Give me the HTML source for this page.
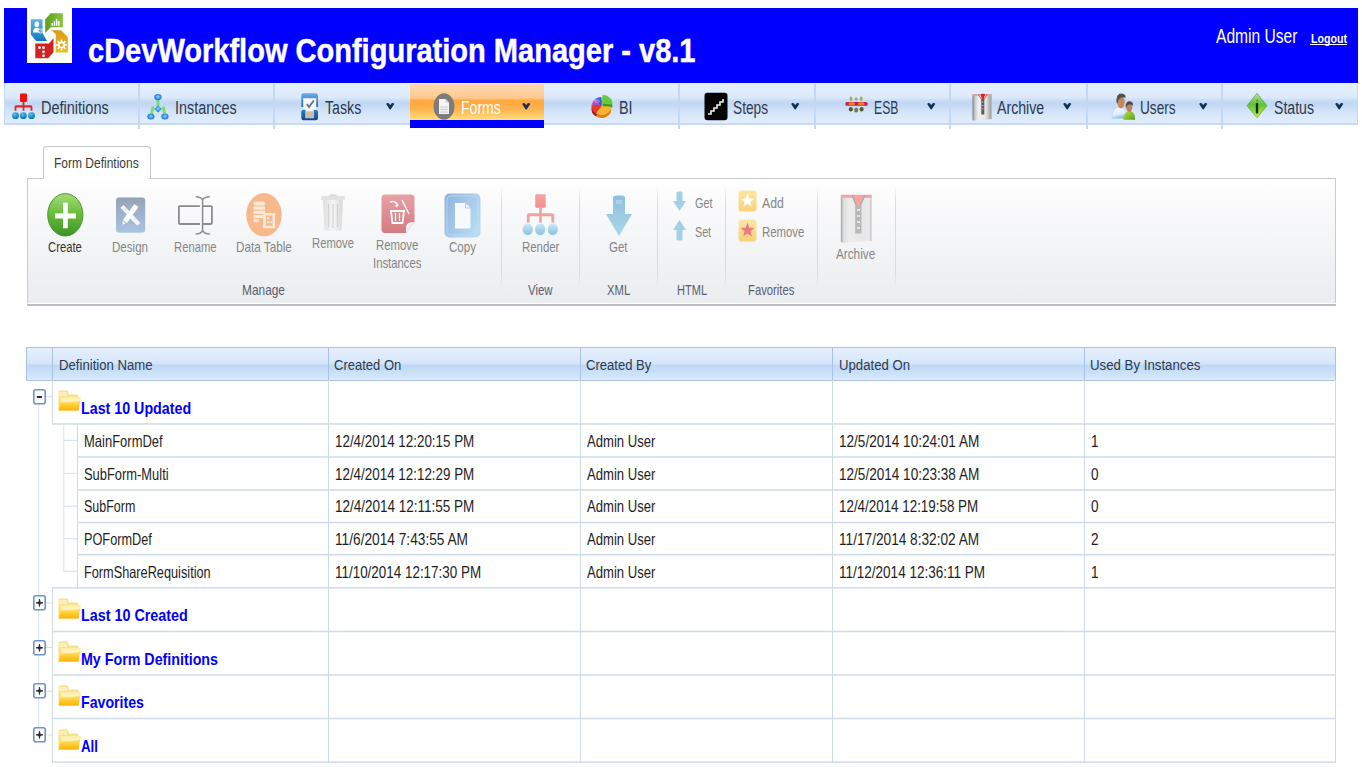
<!DOCTYPE html>
<html><head><meta charset="utf-8"><style>
html,body{margin:0;padding:0;background:#fff;}
body{width:1362px;height:767px;overflow:hidden;position:relative;font-family:"Liberation Sans",sans-serif;}
.t{position:absolute;white-space:nowrap;transform-origin:0 0;}
svg{overflow:visible}
</style></head><body>
<div style="position:absolute;left:4px;top:8px;width:1354px;height:75px;background:#0000fe"></div>
<svg style="position:absolute;left:27px;top:8px" width="45" height="55" viewBox="0 0 45 55">
<rect width="45" height="55" fill="#fff"/>
<defs>
<linearGradient id="lgB" x1="0" y1="0" x2="0" y2="1"><stop offset="0" stop-color="#5cb6e8"/><stop offset="1" stop-color="#1479c0"/></linearGradient>
<linearGradient id="lgG" x1="0" y1="0" x2="1" y2="0"><stop offset="0" stop-color="#5d9e22"/><stop offset="1" stop-color="#8cc43a"/></linearGradient>
<linearGradient id="lgO" x1="0" y1="0" x2="0" y2="1"><stop offset="0" stop-color="#d89a22"/><stop offset="1" stop-color="#f2bb10"/></linearGradient>
</defs>
<polygon points="3.8,11.2 15.5,11.2 15.5,25 20,32.9 9.1,32.9 3.8,26.5" fill="url(#lgB)"/>
<polygon points="18.2,25 18.2,11.3 23.8,5.3 35.9,5.3 35.9,19.3 23.8,19.3" fill="url(#lgG)"/>
<polygon points="24.2,22.3 34,22.3 40.8,29.1 40.8,44.6 28.7,44.6 28.7,26.1" fill="url(#lgO)"/>
<polygon points="8.3,35.5 22,35.5 26.5,30.2 26.5,44.2 21.2,50.3 8.3,50.3" fill="#d02222"/>
<ellipse cx="9.8" cy="16.3" rx="2.3" ry="2.9" fill="#fff"/><path d="M6 24.5 Q6 20 9.8 19.8 Q13.5 20 13.5 24.5 Z" fill="#fff"/><circle cx="13.3" cy="23" r="2.1" fill="#3d9ad8" stroke="#e8f4fb" stroke-width="0.9"/><path d="M12.2 24 L14.4 22" stroke="#e8f4fb" stroke-width="0.7"/>
<rect x="24.5" y="15" width="1.5" height="2.8" fill="#fff"/><rect x="26.7" y="13.2" width="1.5" height="4.6" fill="#fff"/><rect x="28.9" y="10.8" width="1.5" height="7" fill="#fff"/><rect x="31.1" y="13" width="1.5" height="4.8" fill="#fff"/>
<circle cx="34.5" cy="37" r="3.6" fill="#fff"/><path d="M34.5 31.5 V42.5 M29 37 H40 M30.6 33.1 L38.4 40.9 M38.4 33.1 L30.6 40.9" stroke="#fff" stroke-width="1.6"/><circle cx="34.5" cy="37" r="1.8" fill="#e9a81a"/>
<circle cx="12.5" cy="39.7" r="1.4" fill="#fff"/><circle cx="16.5" cy="39.7" r="1.4" fill="#fff"/><circle cx="16.5" cy="43.8" r="1.4" fill="#fff"/><circle cx="16.5" cy="47.8" r="1.4" fill="#fff"/>
</svg>
<div class="t" style="left:88.00px;top:33.41px;font-size:34px;line-height:34px;color:#fff;font-weight:bold;transform:scaleX(0.8537);-webkit-text-stroke:0.5px #fff;">cDevWorkflow Configuration Manager - v8.1</div>
<div class="t" style="left:1215.50px;top:26.07px;font-size:20px;line-height:20px;color:#fff;transform:scaleX(0.7799);">Admin User</div>
<div class="t" style="left:1310.60px;top:31.59px;font-size:13px;line-height:13px;color:#fff;font-weight:bold;transform:scaleX(0.8159);">Logout</div>
<div style="position:absolute;left:1310px;top:44px;width:37px;height:1px;background:#fff"></div>
<div style="position:absolute;left:4px;top:83px;width:1354px;height:40px;border-bottom:2px solid #c6daf2;background:linear-gradient(#e5f1fd 0px,#dce9fb 14.5px,#c6daf4 18px,#c3d8f3 21px,#d4e4f9 29px,#e2eefc 40px)"></div>
<div style="position:absolute;left:4px;top:83px;width:1px;height:42px;background:#c6daf2"></div>
<div style="position:absolute;left:138px;top:84px;width:1.5px;height:45px;background:#c3d8f2"></div>
<div style="position:absolute;left:273px;top:84px;width:1.5px;height:45px;background:#c3d8f2"></div>
<div style="position:absolute;left:678px;top:84px;width:1.5px;height:45px;background:#c3d8f2"></div>
<div style="position:absolute;left:814px;top:84px;width:1.5px;height:45px;background:#c3d8f2"></div>
<div style="position:absolute;left:949px;top:84px;width:1.5px;height:45px;background:#c3d8f2"></div>
<div style="position:absolute;left:1086px;top:84px;width:1.5px;height:45px;background:#c3d8f2"></div>
<div style="position:absolute;left:1221px;top:84px;width:1.5px;height:45px;background:#c3d8f2"></div>
<div style="position:absolute;left:1357px;top:83px;width:1px;height:42px;background:#c6daf2"></div>
<div style="position:absolute;left:410px;top:84px;width:134px;height:36px;background:linear-gradient(#fed8b0 0px,#fdca90 14px,#ffa83e 16.5px,#ffb24e 25px,#fde07c 36px)"></div>
<div style="position:absolute;left:410px;top:120px;width:134px;height:8px;background:#0000fe"></div>
<div class="t" style="left:41.00px;top:98.76px;font-size:18px;line-height:18px;color:#2e3a4e;transform:scaleX(0.8060);">Definitions</div>
<div class="t" style="left:175.30px;top:98.76px;font-size:18px;line-height:18px;color:#2e3a4e;transform:scaleX(0.8000);">Instances</div>
<div class="t" style="left:325.40px;top:98.76px;font-size:18px;line-height:18px;color:#2e3a4e;transform:scaleX(0.7870);">Tasks</div>
<div class="t" style="left:460.50px;top:98.56px;font-size:18px;line-height:18px;color:#fff;transform:scaleX(0.7824);">Forms</div>
<div class="t" style="left:619.00px;top:98.76px;font-size:18px;line-height:18px;color:#2e3a4e;transform:scaleX(0.8000);">BI</div>
<div class="t" style="left:733.00px;top:98.76px;font-size:18px;line-height:18px;color:#2e3a4e;transform:scaleX(0.7609);">Steps</div>
<div class="t" style="left:873.90px;top:98.76px;font-size:18px;line-height:18px;color:#2e3a4e;transform:scaleX(0.6778);">ESB</div>
<div class="t" style="left:997.00px;top:98.76px;font-size:18px;line-height:18px;color:#2e3a4e;transform:scaleX(0.7867);">Archive</div>
<div class="t" style="left:1140.00px;top:98.76px;font-size:18px;line-height:18px;color:#2e3a4e;transform:scaleX(0.7574);">Users</div>
<div class="t" style="left:1273.60px;top:98.76px;font-size:18px;line-height:18px;color:#2e3a4e;transform:scaleX(0.7824);">Status</div>
<svg style="position:absolute;left:385.5px;top:102.8px" width="9" height="7" viewBox="0 0 9 7"><path d="M0.3 1.3 Q0.3 0 1.6 0 Q2.8 0 3.6 1.2 L4.2 2.2 L4.8 1.2 Q5.6 0 6.8 0 Q8.1 0 8.1 1.3 L4.6 6.6 L3.8 6.6 Z" fill="#12305a"/></svg>
<svg style="position:absolute;left:521.6px;top:102.8px" width="9" height="7" viewBox="0 0 9 7"><path d="M0.3 1.3 Q0.3 0 1.6 0 Q2.8 0 3.6 1.2 L4.2 2.2 L4.8 1.2 Q5.6 0 6.8 0 Q8.1 0 8.1 1.3 L4.6 6.6 L3.8 6.6 Z" fill="#12305a"/></svg>
<svg style="position:absolute;left:791px;top:102.8px" width="9" height="7" viewBox="0 0 9 7"><path d="M0.3 1.3 Q0.3 0 1.6 0 Q2.8 0 3.6 1.2 L4.2 2.2 L4.8 1.2 Q5.6 0 6.8 0 Q8.1 0 8.1 1.3 L4.6 6.6 L3.8 6.6 Z" fill="#12305a"/></svg>
<svg style="position:absolute;left:926.7px;top:102.8px" width="9" height="7" viewBox="0 0 9 7"><path d="M0.3 1.3 Q0.3 0 1.6 0 Q2.8 0 3.6 1.2 L4.2 2.2 L4.8 1.2 Q5.6 0 6.8 0 Q8.1 0 8.1 1.3 L4.6 6.6 L3.8 6.6 Z" fill="#12305a"/></svg>
<svg style="position:absolute;left:1063px;top:102.8px" width="9" height="7" viewBox="0 0 9 7"><path d="M0.3 1.3 Q0.3 0 1.6 0 Q2.8 0 3.6 1.2 L4.2 2.2 L4.8 1.2 Q5.6 0 6.8 0 Q8.1 0 8.1 1.3 L4.6 6.6 L3.8 6.6 Z" fill="#12305a"/></svg>
<svg style="position:absolute;left:1198.6px;top:102.8px" width="9" height="7" viewBox="0 0 9 7"><path d="M0.3 1.3 Q0.3 0 1.6 0 Q2.8 0 3.6 1.2 L4.2 2.2 L4.8 1.2 Q5.6 0 6.8 0 Q8.1 0 8.1 1.3 L4.6 6.6 L3.8 6.6 Z" fill="#12305a"/></svg>
<svg style="position:absolute;left:1334.7px;top:102.8px" width="9" height="7" viewBox="0 0 9 7"><path d="M0.3 1.3 Q0.3 0 1.6 0 Q2.8 0 3.6 1.2 L4.2 2.2 L4.8 1.2 Q5.6 0 6.8 0 Q8.1 0 8.1 1.3 L4.6 6.6 L3.8 6.6 Z" fill="#12305a"/></svg>
<svg style="position:absolute;left:12px;top:93px" width="24" height="27" viewBox="0 0 24 27">
<defs><radialGradient id="rgb1" cx="0.4" cy="0.3" r="0.7"><stop offset="0" stop-color="#5cc0f0"/><stop offset="1" stop-color="#0a6fb0"/></radialGradient></defs>
<rect x="8" y="0.6" width="7" height="8.5" rx="1" fill="#f01010"/>
<path d="M10.6 9 h1.8 v3.3 h6.5 q1.5 0 1.5 1.5 v4 h-1.8 v-3.2 h-6.2 v3.2 h-1.8 v-3.2 h-6.2 v3.2 h-1.8 v-4 q0-1.5 1.5-1.5 h6.5 z" fill="#e02424"/>
<circle cx="3.5" cy="22.7" r="3.4" fill="url(#rgb1)"/><circle cx="11.3" cy="22.7" r="3.4" fill="url(#rgb1)"/><circle cx="19.5" cy="22.7" r="3.4" fill="url(#rgb1)"/>
</svg>
<svg style="position:absolute;left:146px;top:92px" width="24" height="29" viewBox="0 0 24 29">
<defs><radialGradient id="rgb2" cx="0.5" cy="0.45" r="0.6"><stop offset="0" stop-color="#8ad8ff"/><stop offset="0.5" stop-color="#3a9af0"/><stop offset="1" stop-color="#1560c8"/></radialGradient></defs>
<path d="M12 7.5 V14" stroke="#78e060" stroke-width="2.8"/><path d="M5.6 21.5 L7 14.5" stroke="#78e060" stroke-width="2.8"/><path d="M17.3 14.5 L18.6 21.5" stroke="#78e060" stroke-width="2.8"/>
<ellipse cx="11.9" cy="5.05" rx="3.7" ry="3.1" fill="url(#rgb2)"/>
<path d="M12 13.6 L15.8 17.1 L12 20.6 L8.2 17.1 Z" fill="url(#rgb2)"/>
<ellipse cx="4.9" cy="24.6" rx="3.6" ry="3" fill="url(#rgb2)"/><ellipse cx="18.9" cy="24.6" rx="3.6" ry="3" fill="url(#rgb2)"/>
</svg>
<svg style="position:absolute;left:301px;top:93px" width="18" height="28" viewBox="0 0 18 28">
<defs><linearGradient id="lgt" x1="0" y1="0" x2="0" y2="1"><stop offset="0" stop-color="#6aaae8"/><stop offset="1" stop-color="#2a68b8"/></linearGradient>
<linearGradient id="lgt2" x1="0" y1="0" x2="0" y2="1"><stop offset="0" stop-color="#2f78c8"/><stop offset="1" stop-color="#0b4a9a"/></linearGradient></defs>
<path d="M0.3 3 Q0.3 0.3 3 0.3 H14.3 Q17 0.3 17 3 V14 H0.3 Z" fill="url(#lgt)"/>
<rect x="2.2" y="5.2" width="13" height="13" fill="#f4f7fb"/>
<path d="M5.8 11 l2.2 3 l4.8 -6.4" fill="none" stroke="#6a6a6a" stroke-width="1.7"/>
<path d="M0.3 19 Q0.3 16.8 2.5 16.8 H4.5 V25.5 H12.8 V16.8 H14.8 Q17 16.8 17 19 V25 Q17 27.3 14.7 27.3 H2.6 Q0.3 27.3 0.3 25 Z" fill="url(#lgt2)"/>
<rect x="4.5" y="18.5" width="8.3" height="7" fill="#cdbda5"/>
<rect x="2.5" y="25.3" width="12.3" height="1.2" fill="#0d4c9c"/>
</svg>
<svg style="position:absolute;left:433px;top:93px" width="22" height="27" viewBox="0 0 22 27">
<ellipse cx="11" cy="13.5" rx="10.5" ry="13.2" fill="#7c7c7c"/>
<path d="M6 6 h6.5 l3.5 3.5 v11.5 h-10 z" fill="#f4f4f4"/>
<path d="M12.5 6 v3.5 h3.5" fill="#d0d0d0"/>
<path d="M7.3 14 h7.4 M7.3 16.5 h7.4 M7.3 19 h7.4" stroke="#bbb" stroke-width="0.8"/>
</svg>
<svg style="position:absolute;left:591px;top:94px" width="23" height="25" viewBox="0 0 23 25">
<path d="M11.50 12.80 L11.50 3.80 A10 9 0 0 1 21.46 13.58 Z" fill="#3c9a1e"/>
<path d="M10.50 15.00 L20.46 15.78 A10 9 0 0 1 4.76 22.37 Z" fill="#d8821a"/>
<path d="M10.50 15.00 L4.76 22.37 A10 9 0 0 1 0.65 13.44 Z" fill="#a81c18"/>
<path d="M10.50 15.00 L0.65 13.44 A10 9 0 0 1 4.34 7.91 Z" fill="#7a2a8a"/>
<path d="M10.50 15.00 L4.34 7.91 A10 9 0 0 1 10.50 6.00 Z" fill="#2a34a0"/>
<path d="M11.50 9.80 L11.50 0.80 A10 9 0 0 1 21.46 10.58 Z" fill="#66cc3a"/>
<path d="M10.50 12.00 L20.46 12.78 A10 9 0 0 1 4.76 19.37 Z" fill="#f6b232"/>
<path d="M10.50 12.00 L4.76 19.37 A10 9 0 0 1 0.65 10.44 Z" fill="#ea3a2c"/>
<path d="M10.50 12.00 L0.65 10.44 A10 9 0 0 1 4.34 4.91 Z" fill="#b44ac4"/>
<path d="M10.50 12.00 L4.34 4.91 A10 9 0 0 1 10.50 3.00 Z" fill="#4658e0"/>
<ellipse cx="6" cy="7" rx="3" ry="2" fill="#fff" opacity="0.25"/>
</svg>
<svg style="position:absolute;left:704px;top:92px" width="24" height="29" viewBox="0 0 24 29">
<rect x="0.5" y="0.8" width="23" height="27.5" rx="3" fill="#050505"/>
<path d="M4 22 h3 v-3 h3 v-3 h3 v-3 h3 v-3 h3 v-3" fill="none" stroke="#f0f0f0" stroke-width="1.6"/>
</svg>
<svg style="position:absolute;left:845px;top:95px" width="24" height="20" viewBox="0 0 24 20">
<rect x="0.3" y="7" width="22.5" height="3.8" rx="1.9" fill="#c0204e"/>
<rect x="3.5" y="7.2" width="6.5" height="3" rx="1.5" fill="#f07a30"/><rect x="13" y="7.2" width="6.5" height="3" rx="1.5" fill="#f07a30"/>
<ellipse cx="6" cy="3.8" rx="1.5" ry="2.2" fill="#a8a870"/><ellipse cx="11.2" cy="4" rx="1.5" ry="1.8" fill="#a8a870"/><ellipse cx="16.2" cy="3.8" rx="1.5" ry="2.2" fill="#a8a870"/>
<ellipse cx="5.8" cy="14.3" rx="2" ry="2.3" fill="#55592c"/><ellipse cx="11.2" cy="15" rx="2" ry="2.5" fill="#777a3c"/><ellipse cx="16.6" cy="14.3" rx="2" ry="2.3" fill="#55592c"/>
</svg>
<svg style="position:absolute;left:972px;top:93px" width="21" height="28" viewBox="0 0 21 28">
<defs><linearGradient id="lga" x1="0" y1="0" x2="1" y2="0"><stop offset="0" stop-color="#7a7a7a"/><stop offset="0.12" stop-color="#c8c8c8"/><stop offset="0.3" stop-color="#eeeeee"/><stop offset="0.7" stop-color="#e6e6e6"/><stop offset="1" stop-color="#9a9a9a"/></linearGradient></defs>
<path d="M1.5 1 H19.5 V26 L1.5 27.5 Q0.5 27.5 0.5 26 V2 Q0.5 1 1.5 1 Z" fill="url(#lga)"/>
<rect x="0.8" y="1" width="18.7" height="1.8" fill="#e8a0a0"/>
<path d="M6.2 1 L9.4 6.5 M15.2 1 L12.2 6.5" stroke="#8a8a8a" stroke-width="1"/><path d="M8.6 1 Q10.8 0.5 13 1 L12 5.5 Q10.8 6.5 9.6 5.5 Z" fill="#f01818"/>
<path d="M9.3 6 H12.3 V21.5 H9.3 Z" fill="#5a5a5a"/>
<path d="M10 9 h1.5 M10 12.5 h1.5 M10 16 h1.5" stroke="#bbb" stroke-width="1"/>
</svg>
<svg style="position:absolute;left:1111px;top:92px" width="25" height="29" viewBox="0 0 25 29">
<defs><linearGradient id="lgu1" x1="0" y1="0" x2="0.3" y2="1"><stop offset="0" stop-color="#f2f6fb"/><stop offset="0.7" stop-color="#e4eef9"/><stop offset="1" stop-color="#8cc0f0"/></linearGradient>
<linearGradient id="lgu2" x1="0" y1="0" x2="1" y2="1"><stop offset="0" stop-color="#b8e050"/><stop offset="1" stop-color="#5a9e10"/></linearGradient></defs>
<path d="M1 26.5 Q1 15.5 8.5 15 Q15.5 15.5 15.5 26.5 Z" fill="url(#lgu1)" stroke="#b8d4f0" stroke-width="0.6"/>
<path d="M6.3 10 Q6.3 4.5 10.2 4.5 Q13.8 4.5 13.8 10 Q13.5 15.5 10 16.5 Q6.5 15.5 6.3 10 Z" fill="#c8895a"/>
<path d="M5.5 10.5 Q4.8 1.5 10.5 1.5 Q15 1.8 14.5 5.8 Q11 4.2 8.2 6.8 Q7 8.5 6.6 11.5 Z" fill="#505050"/>
<path d="M12.5 27.8 Q12.5 19.5 18.5 19 Q24.2 19.5 24.2 27.8 Z" fill="url(#lgu2)"/>
<path d="M15.3 15.5 Q15.3 11.5 18.3 11.5 Q21.3 11.5 21.3 15.5 Q21 19.5 18.3 20 Q15.6 19.5 15.3 15.5 Z" fill="#c08052"/>
<path d="M14.6 15 Q14.5 9.3 18.8 9.3 Q22.2 9.6 22.2 13.8 Q20 11.6 16.8 12.8 Q15.6 13.6 15.3 16 Z" fill="#4a4a4a"/>
</svg>
<svg style="position:absolute;left:1246px;top:92px" width="22" height="27" viewBox="0 0 22 27">
<defs><linearGradient id="lgs" x1="0" y1="0" x2="0" y2="1"><stop offset="0" stop-color="#b6e3a4"/><stop offset="0.45" stop-color="#5cc43a"/><stop offset="1" stop-color="#c8f040"/></linearGradient></defs>
<path d="M11 1.3 L21 13.7 L11 25.7 L1 13.7 Z" fill="url(#lgs)" stroke="#4a9a2a" stroke-width="0.6"/>
<circle cx="11" cy="8.6" r="1" fill="#777"/>
<rect x="9.8" y="11" width="2.4" height="10.5" rx="0.8" fill="#1a2a10"/>
</svg>
<div style="position:absolute;left:42.5px;top:146px;width:106px;height:34px;border:1px solid #c4c7cb;border-bottom:none;border-radius:4px 4px 0 0;background:#fff"></div>
<div style="position:absolute;left:27px;top:178px;width:1307px;height:124px;border:1px solid #c8cbcf;border-bottom:none;background:linear-gradient(#fefefe,#f4f5f7 50%,#eaecef)"></div>
<div style="position:absolute;left:43.5px;top:178px;width:105px;height:2px;background:#fdfdfd"></div>
<div style="position:absolute;left:27px;top:304px;width:1309px;height:2px;background:#b9bdc4"></div>
<div style="position:absolute;left:501px;top:188px;width:1px;height:100px;background:linear-gradient(#f6f6f7,#d9dbde 15%,#d9dbde 85%,#eceef0)"></div>
<div style="position:absolute;left:579px;top:188px;width:1px;height:100px;background:linear-gradient(#f6f6f7,#d9dbde 15%,#d9dbde 85%,#eceef0)"></div>
<div style="position:absolute;left:657px;top:188px;width:1px;height:100px;background:linear-gradient(#f6f6f7,#d9dbde 15%,#d9dbde 85%,#eceef0)"></div>
<div style="position:absolute;left:724.5px;top:188px;width:1px;height:100px;background:linear-gradient(#f6f6f7,#d9dbde 15%,#d9dbde 85%,#eceef0)"></div>
<div style="position:absolute;left:817px;top:188px;width:1px;height:100px;background:linear-gradient(#f6f6f7,#d9dbde 15%,#d9dbde 85%,#eceef0)"></div>
<div style="position:absolute;left:895px;top:188px;width:1px;height:100px;background:linear-gradient(#f6f6f7,#d9dbde 15%,#d9dbde 85%,#eceef0)"></div>
<div class="t" style="left:54.00px;top:156.39px;font-size:14.3px;line-height:14.3px;color:#3c3c3c;transform:scaleX(0.8394);">Form Defintions</div>
<div class="t" style="left:48.20px;top:240.09px;font-size:14.3px;line-height:14.3px;color:#333;transform:scaleX(0.7879);">Create</div>
<div class="t" style="left:112.00px;top:240.09px;font-size:14.3px;line-height:14.3px;color:#868686;transform:scaleX(0.8090);">Design</div>
<div class="t" style="left:174.20px;top:240.09px;font-size:14.3px;line-height:14.3px;color:#868686;transform:scaleX(0.7874);">Rename</div>
<div class="t" style="left:236.00px;top:240.09px;font-size:14.3px;line-height:14.3px;color:#868686;transform:scaleX(0.8194);">Data Table</div>
<div class="t" style="left:311.60px;top:235.69px;font-size:14.3px;line-height:14.3px;color:#868686;transform:scaleX(0.7876);">Remove</div>
<div class="t" style="left:376.20px;top:238.09px;font-size:14.3px;line-height:14.3px;color:#868686;transform:scaleX(0.7951);">Remove</div>
<div class="t" style="left:373.30px;top:255.89px;font-size:14.3px;line-height:14.3px;color:#868686;transform:scaleX(0.7925);">Instances</div>
<div class="t" style="left:449.00px;top:240.09px;font-size:14.3px;line-height:14.3px;color:#868686;transform:scaleX(0.8084);">Copy</div>
<div class="t" style="left:521.80px;top:240.09px;font-size:14.3px;line-height:14.3px;color:#868686;transform:scaleX(0.7974);">Render</div>
<div class="t" style="left:609.40px;top:240.09px;font-size:14.3px;line-height:14.3px;color:#868686;transform:scaleX(0.8052);">Get</div>
<div class="t" style="left:694.90px;top:195.59px;font-size:14.3px;line-height:14.3px;color:#868686;transform:scaleX(0.7662);">Get</div>
<div class="t" style="left:694.90px;top:224.89px;font-size:14.3px;line-height:14.3px;color:#868686;transform:scaleX(0.7488);">Set</div>
<div class="t" style="left:761.70px;top:195.59px;font-size:14.3px;line-height:14.3px;color:#868686;transform:scaleX(0.8622);">Add</div>
<div class="t" style="left:762.00px;top:224.89px;font-size:14.3px;line-height:14.3px;color:#868686;transform:scaleX(0.7951);">Remove</div>
<div class="t" style="left:836.10px;top:246.59px;font-size:14.3px;line-height:14.3px;color:#868686;transform:scaleX(0.8218);">Archive</div>
<div class="t" style="left:242.00px;top:282.79px;font-size:14.3px;line-height:14.3px;color:#5a6070;transform:scaleX(0.8317);">Manage</div>
<div class="t" style="left:527.80px;top:282.79px;font-size:14.3px;line-height:14.3px;color:#5a6070;transform:scaleX(0.8019);">View</div>
<div class="t" style="left:606.80px;top:282.79px;font-size:14.3px;line-height:14.3px;color:#5a6070;transform:scaleX(0.7891);">XML</div>
<div class="t" style="left:676.70px;top:282.79px;font-size:14.3px;line-height:14.3px;color:#5a6070;transform:scaleX(0.7712);">HTML</div>
<div class="t" style="left:747.70px;top:282.79px;font-size:14.3px;line-height:14.3px;color:#5a6070;transform:scaleX(0.7891);">Favorites</div>
<svg style="position:absolute;left:47px;top:193px" width="37" height="44" viewBox="0 0 37 44">
<defs><linearGradient id="rgc" x1="0" y1="0" x2="0" y2="1"><stop offset="0" stop-color="#a6dc78"/><stop offset="0.45" stop-color="#6cbe3e"/><stop offset="1" stop-color="#3e9424"/></linearGradient></defs>
<ellipse cx="18.3" cy="21.8" rx="17.6" ry="21.2" fill="url(#rgc)" stroke="#4a9a2c" stroke-width="1"/>
<rect x="16" y="9.6" width="4.8" height="25.7" fill="#fff"/><rect x="8.2" y="20.4" width="20.7" height="5.1" fill="#fff"/>
</svg>
<svg style="position:absolute;left:116px;top:197px" width="30" height="36" viewBox="0 0 30 36">
<defs><linearGradient id="lgd" x1="0" y1="0" x2="0" y2="1"><stop offset="0" stop-color="#95a2b6"/><stop offset="1" stop-color="#a9c5e2"/></linearGradient></defs>
<rect x="0" y="0.4" width="29.2" height="35.4" rx="3" fill="url(#lgd)"/>
<path d="M6 9.4 L22.8 27.4" stroke="#f4f6f9" stroke-width="4.2"/>
<path d="M9 13 l1.5 -1.4 M12 16.2 l1.5 -1.4 M15 19.4 l1.5 -1.4 M18 22.6 l1.5 -1.4" stroke="#b8c4d4" stroke-width="0.8"/>
<path d="M20.4 8.5 L9 24.5" stroke="#ffffff" stroke-width="5"/>
<path d="M6.5 27.8 L6.8 24 L9.8 26.2 Z" fill="#fff"/>
</svg>
<svg style="position:absolute;left:177px;top:195px" width="37" height="41" viewBox="0 0 37 41">
<path d="M22.9 11.1 H2.8 Q1.9 11.1 1.9 12 V28.1 Q1.9 29 2.8 29 H22.9 M25.6 11.1 H34 Q34.9 11.1 34.9 12 V28.1 Q34.9 29 34 29 H25.6" fill="none" stroke="#8c8c8c" stroke-width="1.8"/>
<path d="M18.7 1.8 Q24 1.8 25.6 5 Q27.2 1.8 32.8 1.8 M25.6 5 V35.5 M18.7 39 Q24 39 25.6 35.5 Q27.2 39 32.8 39" fill="none" stroke="#8c8c8c" stroke-width="1.5"/>
</svg>
<svg style="position:absolute;left:246px;top:193px" width="37" height="44" viewBox="0 0 37 44">
<ellipse cx="18" cy="21.8" rx="17.7" ry="21.7" fill="#f7b98c"/>
<g fill="#fde9da">
<rect x="7.5" y="8.5" width="11.5" height="4" rx="2"/>
<rect x="7.5" y="13.5" width="11.5" height="3.2"/>
<rect x="7.5" y="17.7" width="11.5" height="3.2"/>
<rect x="7.5" y="21.9" width="11.5" height="3.2"/>
<rect x="7.5" y="26.1" width="5" height="3.2"/>
<rect x="17" y="20" width="3" height="15"/><rect x="17" y="20" width="12" height="2.4"/>
<rect x="17" y="32.8" width="12" height="2.4"/><rect x="26.5" y="20" width="2.6" height="15"/>
<rect x="21" y="24" width="2.2" height="2.2"/><rect x="21" y="28" width="2.2" height="2.2"/><rect x="24" y="28" width="1.6" height="2.2"/>
</g>
</svg>
<svg style="position:absolute;left:320px;top:193px" width="26" height="39" viewBox="0 0 26 39">
<defs><linearGradient id="lgr" x1="0" y1="0" x2="1" y2="0"><stop offset="0" stop-color="#dedede"/><stop offset="0.5" stop-color="#f6f6f6"/><stop offset="1" stop-color="#d8d8d8"/></linearGradient></defs>
<path d="M9 3 Q9 1 13 1 Q17 1 17 3 Z" fill="#dcdcdc"/>
<rect x="1" y="3" width="24" height="4" rx="1.5" fill="#e2e2e2"/>
<path d="M3 7 H23 L21.5 37 Q13 39 4.5 37 Z" fill="url(#lgr)"/>
<path d="M8.5 11 V34 M13 11 V35 M17.5 11 V34" stroke="#d2d2d2" stroke-width="1.2"/>
</svg>
<svg style="position:absolute;left:381px;top:194px" width="34" height="40" viewBox="0 0 34 40">
<defs><linearGradient id="lgri" x1="0" y1="0" x2="0" y2="1"><stop offset="0" stop-color="#e9a0a5"/><stop offset="1" stop-color="#d47a80"/></linearGradient></defs>
<path d="M4 0.5 H30 Q33.5 0.5 33.5 4 V28 L25 39 H4 Q0.5 39 0.5 35.5 V4 Q0.5 0.5 4 0.5 Z" fill="url(#lgri)"/>
<path d="M25 39 L33.5 28 Q26 28 25 32 Z" fill="#f0f0f0"/>
<path d="M10 17 h13 l-1.5 12 h-10 z" fill="none" stroke="#fff" stroke-width="1.8"/>
<path d="M14.5 19 v8 M18.5 19 v8" stroke="#fff" stroke-width="1.3"/>
<path d="M9 8 Q15 6 17 12" fill="none" stroke="#fff" stroke-width="1.6"/><path d="M16 13.5 l-2.5 -2 l3.8 -0.8 z" fill="#fff"/>
<path d="M21 6 L28 20" stroke="#fff" stroke-width="1.4"/>
</svg>
<svg style="position:absolute;left:444px;top:193px" width="37" height="45" viewBox="0 0 37 45">
<defs><linearGradient id="lgcp" x1="0" y1="0" x2="1" y2="0.6"><stop offset="0" stop-color="#8fb2da"/><stop offset="0.6" stop-color="#a6cbeb"/><stop offset="1" stop-color="#b6daf2"/></linearGradient></defs>
<rect x="0.5" y="0.5" width="36" height="44" rx="5" fill="url(#lgcp)"/>
<rect x="3" y="3" width="31" height="39" rx="4" fill="none" stroke="#c4def2" stroke-width="1" opacity="0.7"/>
<path d="M11 10 h10.5 l5 5 v20.5 h-15.5 z" fill="#f6fafd"/>
<path d="M21.5 10 v5 h5" fill="none" stroke="#9cc2e4" stroke-width="0.8"/>
</svg>
<svg style="position:absolute;left:522px;top:194px" width="37" height="43" viewBox="0 0 37 43">
<defs><linearGradient id="rgr" x1="0" y1="0" x2="0" y2="1"><stop offset="0" stop-color="#d2ecf8"/><stop offset="0.5" stop-color="#a6d4ec"/><stop offset="1" stop-color="#8cc2e2"/></linearGradient>
<linearGradient id="lgrr" x1="0" y1="0" x2="0" y2="1"><stop offset="0" stop-color="#f8a4a4"/><stop offset="1" stop-color="#f09090"/></linearGradient></defs>
<rect x="13.2" y="0.2" width="10.5" height="13.5" rx="1.2" fill="url(#lgrr)"/>
<path d="M17.2 13.5 h2.6 v5.8 h10.2 q2.2 0 2.2 2.2 v7 h-2.8 v-6.2 h-9.6 v6.2 h-2.6 v-6.2 h-9.6 v6.2 h-2.8 v-7 q0-2.2 2.2-2.2 h10.2 z" fill="#f0a0a0"/>
<ellipse cx="5.7" cy="35.3" rx="5.1" ry="6" fill="url(#rgr)"/><ellipse cx="18.2" cy="35.3" rx="5.1" ry="6" fill="url(#rgr)"/><ellipse cx="30.8" cy="35.3" rx="5.1" ry="6" fill="url(#rgr)"/>
</svg>
<svg style="position:absolute;left:605px;top:195px" width="28" height="42" viewBox="0 0 28 42">
<defs><linearGradient id="lgx" x1="0" y1="0" x2="0" y2="1"><stop offset="0" stop-color="#8fc0dc"/><stop offset="1" stop-color="#a9d6ea"/></linearGradient></defs>
<path d="M8 3 Q8 0.5 11 0.5 H17 Q20 0.5 20 3 V19 H27 L14 41 L1 19 H8 Z" fill="url(#lgx)"/>
<rect x="11" y="5" width="6" height="4" fill="#b0d2e6"/>
</svg>
<svg style="position:absolute;left:672px;top:191px" width="15" height="21" viewBox="0 0 15 21">
<path d="M4.5 2 Q4.5 0.5 6 0.5 H9 Q10.5 0.5 10.5 2 V10 H14 L7.5 20 L1 10 H4.5 Z" fill="#a4cfe6"/>
</svg>
<svg style="position:absolute;left:672px;top:219px" width="15" height="22" viewBox="0 0 15 22">
<path d="M4.5 20 Q4.5 21.5 6 21.5 H9 Q10.5 21.5 10.5 20 V11 H14 L7.5 1 L1 11 H4.5 Z" fill="#a4cfe6"/>
</svg>
<svg style="position:absolute;left:738px;top:190px" width="19" height="22" viewBox="0 0 19 22">
<defs><linearGradient id="lgf" x1="0" y1="0" x2="0" y2="1"><stop offset="0" stop-color="#fce6a6"/><stop offset="1" stop-color="#f8d27a"/></linearGradient></defs>
<rect x="0.5" y="0.5" width="18" height="21" rx="3" fill="url(#lgf)"/>
<path d="M9.5 3.5 L11.3 8.5 L16.3 8.7 L12.3 11.8 L13.8 16.8 L9.5 13.8 L5.2 16.8 L6.7 11.8 L2.7 8.7 L7.7 8.5 Z" fill="#fff"/>
</svg>
<svg style="position:absolute;left:738px;top:219px" width="19" height="23" viewBox="0 0 19 23">
<rect x="0.5" y="0.5" width="18" height="22" rx="3" fill="url(#lgf)"/>
<path d="M9.5 3.5 L11.3 8.8 L16.5 9 L12.4 12.2 L13.9 17.6 L9.5 14.4 L5.1 17.6 L6.6 12.2 L2.5 9 L7.7 8.8 Z" fill="#f27880"/>
</svg>
<svg style="position:absolute;left:840px;top:194px" width="33" height="50" viewBox="0 0 33 50">
<defs><linearGradient id="lgar" x1="0" y1="0" x2="1" y2="0"><stop offset="0" stop-color="#a8a8a8"/><stop offset="0.1" stop-color="#e0e0e0"/><stop offset="0.3" stop-color="#ededed"/><stop offset="0.75" stop-color="#e6e6e6"/><stop offset="0.92" stop-color="#ececec"/><stop offset="1" stop-color="#c0c0c0"/></linearGradient></defs>
<path d="M2.5 0.8 H31.5 V47 L2.5 48.8 Q0.8 48.8 0.8 47 V2.5 Q0.8 0.8 2.5 0.8 Z" fill="url(#lgar)"/>
<rect x="1" y="0.8" width="30.5" height="3" fill="#f2a4aa"/>
<path d="M12 1 L16 11 L20.5 11 L25 1 Z" fill="#f5a3a8"/>
<path d="M12 1 L16 11 M25 1 L20.5 11" stroke="#a8a8a8" stroke-width="1.2"/>
<rect x="15.2" y="11" width="6.3" height="28.5" fill="#b8b8b8"/>
<path d="M17 16 h3 M17 22 h3 M17 28 h3 M17 34 h3" stroke="#f4f4f4" stroke-width="1.6"/>
</svg>
<div style="position:absolute;left:26px;top:347px;width:1308px;height:32px;border:1px solid #a9c2e6;background:linear-gradient(#e4f0fd 0px,#d9e8fc 12px,#d3e5fb 16px,#bfd8f5 17px,#c6ddf7 22px,#d3e5fb 29px,#e3eefc 32px)"></div>
<div style="position:absolute;left:52px;top:347px;width:1px;height:34px;background:#a9c2e6"></div>
<div style="position:absolute;left:328px;top:347px;width:1px;height:34px;background:#a9c2e6"></div>
<div style="position:absolute;left:580px;top:347px;width:1px;height:34px;background:#a9c2e6"></div>
<div style="position:absolute;left:832px;top:347px;width:1px;height:34px;background:#a9c2e6"></div>
<div style="position:absolute;left:1084px;top:347px;width:1px;height:34px;background:#a9c2e6"></div>
<div class="t" style="left:58.70px;top:356.88px;font-size:15.5px;line-height:15.5px;color:#2e3a4e;transform:scaleX(0.8486);">Definition Name</div>
<div class="t" style="left:334.40px;top:356.58px;font-size:15.5px;line-height:15.5px;color:#2e3a4e;transform:scaleX(0.8402);">Created On</div>
<div class="t" style="left:586.30px;top:356.58px;font-size:15.5px;line-height:15.5px;color:#2e3a4e;transform:scaleX(0.8415);">Created By</div>
<div class="t" style="left:838.80px;top:356.58px;font-size:15.5px;line-height:15.5px;color:#2e3a4e;transform:scaleX(0.8493);">Updated On</div>
<div class="t" style="left:1090.40px;top:356.58px;font-size:15.5px;line-height:15.5px;color:#2e3a4e;transform:scaleX(0.8545);">Used By Instances</div>
<svg style="position:absolute;left:0;top:0" width="1362" height="767" viewBox="0 0 1362 767"><rect x="328" y="380.00" width="1" height="382.80" fill="#cfdbeb"/><rect x="580" y="380.00" width="1" height="382.80" fill="#cfdbeb"/><rect x="832" y="380.00" width="1" height="382.80" fill="#cfdbeb"/><rect x="1084" y="380.00" width="1" height="382.80" fill="#cfdbeb"/><rect x="1335" y="380.00" width="1" height="382.80" fill="#cfdbeb"/><rect x="52" y="380.00" width="1" height="44.70" fill="#cfdbeb"/><rect x="77" y="424.00" width="1" height="164.60" fill="#cfdbeb"/><rect x="52" y="587.10" width="1" height="175.70" fill="#cfdbeb"/><rect x="52" y="423.20" width="1284" height="1.5" fill="#cfdbeb"/><rect x="77" y="456.21" width="1259" height="1.5" fill="#cfdbeb"/><rect x="77" y="489.20" width="1259" height="1.5" fill="#cfdbeb"/><rect x="77" y="521.75" width="1259" height="1.5" fill="#cfdbeb"/><rect x="77" y="553.95" width="1259" height="1.5" fill="#cfdbeb"/><rect x="77" y="587.12" width="1259" height="1.5" fill="#cfdbeb"/><rect x="52" y="587.12" width="26" height="1.5" fill="#cfdbeb"/><rect x="52" y="630.75" width="1284" height="1.5" fill="#cfdbeb"/><rect x="52" y="674.21" width="1284" height="1.5" fill="#cfdbeb"/><rect x="52" y="717.75" width="1284" height="1.5" fill="#cfdbeb"/><rect x="52" y="761.35" width="1284" height="1.5" fill="#cfdbeb"/><rect x="38.2" y="404.00" width="1" height="323.50" fill="#d8e3f1"/><rect x="45.5" y="396.00" width="6.5" height="1.2" fill="#d8e3f1"/><rect x="45.5" y="602.40" width="6.5" height="1.2" fill="#d8e3f1"/><rect x="45.5" y="646.90" width="6.5" height="1.2" fill="#d8e3f1"/><rect x="45.5" y="690.60" width="6.5" height="1.2" fill="#d8e3f1"/><rect x="45.5" y="734.40" width="6.5" height="1.2" fill="#d8e3f1"/><rect x="63.3" y="424.00" width="1" height="148.00" fill="#d8e3f1"/><rect x="63.8" y="439.85" width="13.200000000000003" height="1.2" fill="#d8e3f1"/><rect x="63.8" y="472.85" width="13.200000000000003" height="1.2" fill="#d8e3f1"/><rect x="63.8" y="505.62" width="13.200000000000003" height="1.2" fill="#d8e3f1"/><rect x="63.8" y="538.00" width="13.200000000000003" height="1.2" fill="#d8e3f1"/><rect x="63.8" y="570.69" width="13.200000000000003" height="1.2" fill="#d8e3f1"/></svg>
<svg style="position:absolute;left:33px;top:389.3px" width="13" height="16" viewBox="0 0 13 16"><rect x="0.8" y="0.8" width="11.4" height="14" rx="2" fill="#fff" stroke="#6f93c4" stroke-width="1.6"/><rect x="3.6" y="7" width="5.6" height="2" rx="0.9" fill="#2a2a2a"/></svg>
<svg style="position:absolute;left:33px;top:595.3px" width="13" height="16" viewBox="0 0 13 16"><rect x="0.8" y="0.8" width="11.4" height="14" rx="2" fill="#fff" stroke="#6f93c4" stroke-width="1.6"/><path d="M3.2 7.8 Q6.5 6.6 9.8 7.8 Q6.5 9 3.2 7.8 Z" fill="#2a2a2a" stroke="#2a2a2a" stroke-width="1"/><path d="M6.5 4.2 Q5.3 7.8 6.5 11.4 Q7.7 7.8 6.5 4.2 Z" fill="#2a2a2a" stroke="#2a2a2a" stroke-width="1"/></svg>
<svg style="position:absolute;left:33px;top:639.6px" width="13" height="16" viewBox="0 0 13 16"><rect x="0.8" y="0.8" width="11.4" height="14" rx="2" fill="#fff" stroke="#6f93c4" stroke-width="1.6"/><path d="M3.2 7.8 Q6.5 6.6 9.8 7.8 Q6.5 9 3.2 7.8 Z" fill="#2a2a2a" stroke="#2a2a2a" stroke-width="1"/><path d="M6.5 4.2 Q5.3 7.8 6.5 11.4 Q7.7 7.8 6.5 4.2 Z" fill="#2a2a2a" stroke="#2a2a2a" stroke-width="1"/></svg>
<svg style="position:absolute;left:33px;top:683.4px" width="13" height="16" viewBox="0 0 13 16"><rect x="0.8" y="0.8" width="11.4" height="14" rx="2" fill="#fff" stroke="#6f93c4" stroke-width="1.6"/><path d="M3.2 7.8 Q6.5 6.6 9.8 7.8 Q6.5 9 3.2 7.8 Z" fill="#2a2a2a" stroke="#2a2a2a" stroke-width="1"/><path d="M6.5 4.2 Q5.3 7.8 6.5 11.4 Q7.7 7.8 6.5 4.2 Z" fill="#2a2a2a" stroke="#2a2a2a" stroke-width="1"/></svg>
<svg style="position:absolute;left:33px;top:727.4px" width="13" height="16" viewBox="0 0 13 16"><rect x="0.8" y="0.8" width="11.4" height="14" rx="2" fill="#fff" stroke="#6f93c4" stroke-width="1.6"/><path d="M3.2 7.8 Q6.5 6.6 9.8 7.8 Q6.5 9 3.2 7.8 Z" fill="#2a2a2a" stroke="#2a2a2a" stroke-width="1"/><path d="M6.5 4.2 Q5.3 7.8 6.5 11.4 Q7.7 7.8 6.5 4.2 Z" fill="#2a2a2a" stroke="#2a2a2a" stroke-width="1"/></svg>
<svg width="0" height="0" style="position:absolute"><defs><linearGradient id="lgfo" x1="0" y1="0" x2="0" y2="1"><stop offset="0" stop-color="#fff0b0"/><stop offset="0.45" stop-color="#ffd84a"/><stop offset="1" stop-color="#ffb000"/></linearGradient></defs></svg>
<svg style="position:absolute;left:58px;top:390px" width="24" height="22" viewBox="0 0 24 22"><path d="M0.5 1.8 Q0.5 0.5 1.8 0.5 H8.5 Q9.8 0.5 10.2 1.8 L10.6 4.5 H19.3 Q20.3 4.5 20.3 5.5 V20.5 H0.5 Z" fill="#fbe08a"/><path d="M1 2 H9 V6 H1 Z" fill="#fff3c6" opacity="0.8"/><path d="M3 7 H22.8 L20.6 20.6 H0.6 Z" fill="url(#lgfo)"/><path d="M3.5 8.5 H22 L21.5 11 Q12 12.5 3 12.5 Z" fill="#fff8d8" opacity="0.7"/></svg>
<svg style="position:absolute;left:58px;top:598px" width="24" height="22" viewBox="0 0 24 22"><path d="M0.5 1.8 Q0.5 0.5 1.8 0.5 H8.5 Q9.8 0.5 10.2 1.8 L10.6 4.5 H19.3 Q20.3 4.5 20.3 5.5 V20.5 H0.5 Z" fill="#fbe08a"/><path d="M1 2 H9 V6 H1 Z" fill="#fff3c6" opacity="0.8"/><path d="M3 7 H22.8 L20.6 20.6 H0.6 Z" fill="url(#lgfo)"/><path d="M3.5 8.5 H22 L21.5 11 Q12 12.5 3 12.5 Z" fill="#fff8d8" opacity="0.7"/></svg>
<svg style="position:absolute;left:58px;top:641px" width="24" height="22" viewBox="0 0 24 22"><path d="M0.5 1.8 Q0.5 0.5 1.8 0.5 H8.5 Q9.8 0.5 10.2 1.8 L10.6 4.5 H19.3 Q20.3 4.5 20.3 5.5 V20.5 H0.5 Z" fill="#fbe08a"/><path d="M1 2 H9 V6 H1 Z" fill="#fff3c6" opacity="0.8"/><path d="M3 7 H22.8 L20.6 20.6 H0.6 Z" fill="url(#lgfo)"/><path d="M3.5 8.5 H22 L21.5 11 Q12 12.5 3 12.5 Z" fill="#fff8d8" opacity="0.7"/></svg>
<svg style="position:absolute;left:58px;top:685px" width="24" height="22" viewBox="0 0 24 22"><path d="M0.5 1.8 Q0.5 0.5 1.8 0.5 H8.5 Q9.8 0.5 10.2 1.8 L10.6 4.5 H19.3 Q20.3 4.5 20.3 5.5 V20.5 H0.5 Z" fill="#fbe08a"/><path d="M1 2 H9 V6 H1 Z" fill="#fff3c6" opacity="0.8"/><path d="M3 7 H22.8 L20.6 20.6 H0.6 Z" fill="url(#lgfo)"/><path d="M3.5 8.5 H22 L21.5 11 Q12 12.5 3 12.5 Z" fill="#fff8d8" opacity="0.7"/></svg>
<svg style="position:absolute;left:58px;top:729px" width="24" height="22" viewBox="0 0 24 22"><path d="M0.5 1.8 Q0.5 0.5 1.8 0.5 H8.5 Q9.8 0.5 10.2 1.8 L10.6 4.5 H19.3 Q20.3 4.5 20.3 5.5 V20.5 H0.5 Z" fill="#fbe08a"/><path d="M1 2 H9 V6 H1 Z" fill="#fff3c6" opacity="0.8"/><path d="M3 7 H22.8 L20.6 20.6 H0.6 Z" fill="url(#lgfo)"/><path d="M3.5 8.5 H22 L21.5 11 Q12 12.5 3 12.5 Z" fill="#fff8d8" opacity="0.7"/></svg>
<div class="t" style="left:81.00px;top:400.41px;font-size:17px;line-height:17px;color:#0000ff;font-weight:bold;transform:scaleX(0.8385);">Last 10 Updated</div>
<div class="t" style="left:81.30px;top:607.31px;font-size:17px;line-height:17px;color:#0000ff;font-weight:bold;transform:scaleX(0.8436);">Last 10 Created</div>
<div class="t" style="left:81.30px;top:650.61px;font-size:17px;line-height:17px;color:#0000ff;font-weight:bold;transform:scaleX(0.8384);">My Form Definitions</div>
<div class="t" style="left:81.30px;top:694.11px;font-size:17px;line-height:17px;color:#0000ff;font-weight:bold;transform:scaleX(0.8333);">Favorites</div>
<div class="t" style="left:81.20px;top:738.31px;font-size:17px;line-height:17px;color:#0000ff;font-weight:bold;transform:scaleX(0.7834);">All</div>
<div class="t" style="left:83.90px;top:432.93px;font-size:16.5px;line-height:16.5px;color:#1e1e1e;transform:scaleX(0.7872);">MainFormDef</div>
<div class="t" style="left:335.30px;top:432.93px;font-size:16.5px;line-height:16.5px;color:#1e1e1e;transform:scaleX(0.8118);">12/4/2014 12:20:15 PM</div>
<div class="t" style="left:586.50px;top:432.93px;font-size:16.5px;line-height:16.5px;color:#1e1e1e;transform:scaleX(0.7935);">Admin User</div>
<div class="t" style="left:839.40px;top:432.93px;font-size:16.5px;line-height:16.5px;color:#1e1e1e;transform:scaleX(0.8218);">12/5/2014 10:24:01 AM</div>
<div class="t" style="left:1091.30px;top:432.93px;font-size:16.5px;line-height:16.5px;color:#1e1e1e;transform:scaleX(0.8200);">1</div>
<div class="t" style="left:83.90px;top:465.73px;font-size:16.5px;line-height:16.5px;color:#1e1e1e;transform:scaleX(0.7819);">SubForm-Multi</div>
<div class="t" style="left:335.30px;top:465.73px;font-size:16.5px;line-height:16.5px;color:#1e1e1e;transform:scaleX(0.8118);">12/4/2014 12:12:29 PM</div>
<div class="t" style="left:586.50px;top:465.73px;font-size:16.5px;line-height:16.5px;color:#1e1e1e;transform:scaleX(0.7935);">Admin User</div>
<div class="t" style="left:839.40px;top:465.73px;font-size:16.5px;line-height:16.5px;color:#1e1e1e;transform:scaleX(0.8218);">12/5/2014 10:23:38 AM</div>
<div class="t" style="left:1091.30px;top:465.73px;font-size:16.5px;line-height:16.5px;color:#1e1e1e;transform:scaleX(0.8200);">0</div>
<div class="t" style="left:83.90px;top:498.23px;font-size:16.5px;line-height:16.5px;color:#1e1e1e;transform:scaleX(0.7555);">SubForm</div>
<div class="t" style="left:335.30px;top:498.23px;font-size:16.5px;line-height:16.5px;color:#1e1e1e;transform:scaleX(0.8180);">12/4/2014 12:11:55 PM</div>
<div class="t" style="left:586.50px;top:498.23px;font-size:16.5px;line-height:16.5px;color:#1e1e1e;transform:scaleX(0.7935);">Admin User</div>
<div class="t" style="left:839.40px;top:498.23px;font-size:16.5px;line-height:16.5px;color:#1e1e1e;transform:scaleX(0.8112);">12/4/2014 12:19:58 PM</div>
<div class="t" style="left:1091.30px;top:498.23px;font-size:16.5px;line-height:16.5px;color:#1e1e1e;transform:scaleX(0.8200);">0</div>
<div class="t" style="left:83.90px;top:531.43px;font-size:16.5px;line-height:16.5px;color:#1e1e1e;transform:scaleX(0.7707);">POFormDef</div>
<div class="t" style="left:335.30px;top:531.43px;font-size:16.5px;line-height:16.5px;color:#1e1e1e;transform:scaleX(0.8302);">11/6/2014 7:43:55 AM</div>
<div class="t" style="left:586.50px;top:531.43px;font-size:16.5px;line-height:16.5px;color:#1e1e1e;transform:scaleX(0.7935);">Admin User</div>
<div class="t" style="left:839.40px;top:531.43px;font-size:16.5px;line-height:16.5px;color:#1e1e1e;transform:scaleX(0.8276);">11/17/2014 8:32:02 AM</div>
<div class="t" style="left:1091.30px;top:531.43px;font-size:16.5px;line-height:16.5px;color:#1e1e1e;transform:scaleX(0.8200);">2</div>
<div class="t" style="left:83.90px;top:564.33px;font-size:16.5px;line-height:16.5px;color:#1e1e1e;transform:scaleX(0.7716);">FormShareRequisition</div>
<div class="t" style="left:335.30px;top:564.33px;font-size:16.5px;line-height:16.5px;color:#1e1e1e;transform:scaleX(0.8139);">11/10/2014 12:17:30 PM</div>
<div class="t" style="left:586.50px;top:564.33px;font-size:16.5px;line-height:16.5px;color:#1e1e1e;transform:scaleX(0.7935);">Admin User</div>
<div class="t" style="left:839.40px;top:564.33px;font-size:16.5px;line-height:16.5px;color:#1e1e1e;transform:scaleX(0.8194);">11/12/2014 12:36:11 PM</div>
<div class="t" style="left:1091.30px;top:564.33px;font-size:16.5px;line-height:16.5px;color:#1e1e1e;transform:scaleX(0.8200);">1</div>
</body></html>
